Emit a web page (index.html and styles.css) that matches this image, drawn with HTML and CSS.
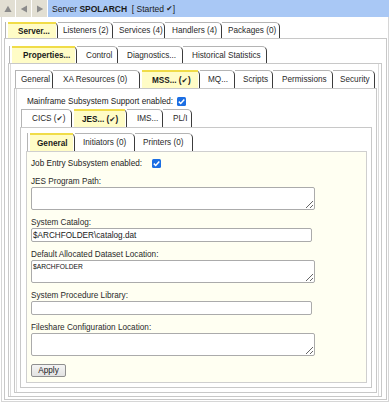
FILE: index.html
```html
<!DOCTYPE html>
<html>
<head>
<meta charset="utf-8">
<title>Server SPOLARCH</title>
<link rel="stylesheet" href="styles.css">
</head>
<body>
<div class="topbar">
  <div class="navbtn"><svg viewBox="0 0 8 8"><polygon points="4,0.8 7.6,7 0.4,7"/></svg></div>
  <div class="navbtn"><svg viewBox="0 0 8 8"><polygon points="0.8,4 7,0.6 7,7.4"/></svg></div>
  <div class="navbtn"><svg viewBox="0 0 8 8"><polygon points="7.2,4 1,0.6 1,7.4"/></svg></div>
  <div class="title">Server&nbsp;<b>SPOLARCH</b>&nbsp; [ Started&nbsp;<span class="chk">✔</span>]</div>
</div>
<div class="frame">
  <div class="tabs t1">
    <div class="tab first sel k-server"><span class="yel">Server...</span></div>
    <div class="tab k-listeners">Listeners (2)</div>
    <div class="tab k-services">Services (4)</div>
    <div class="tab k-handlers">Handlers (4)</div>
    <div class="tab k-packages">Packages (0)</div>
  </div>
  <div class="panel p1">
    <div class="tabs t2">
      <div class="tab first sel k-props"><span class="yel">Properties...</span></div>
      <div class="tab k-control">Control</div>
      <div class="tab k-diag">Diagnostics...</div>
      <div class="tab k-hist">Historical Statistics</div>
    </div>
    <div class="panel p2">
      <div class="tabs t3">
        <div class="tab first k-general">General</div>
        <div class="tab k-xa">XA Resources (0)</div>
        <div class="tab sel k-mss"><span class="yel">MSS... (<span class="chk">✔</span>)</span></div>
        <div class="tab k-mq">MQ...</div>
        <div class="tab k-scripts">Scripts</div>
        <div class="tab k-perm">Permissions</div>
        <div class="tab k-sec">Security</div>
      </div>
      <div class="panel p3">
        <div class="cbrow">Mainframe Subsystem Support enabled: <span class="cb cb-a"><svg viewBox="0 0 8 8"><path d="M1.6 4.1 L3.3 5.8 L6.5 2.2"/></svg></span></div>
        <div class="tabs t4">
          <div class="tab first k-cics">CICS (<span class="chk">✔</span>)</div>
          <div class="tab sel k-jes"><span class="yel">JES... (<span class="chk">✔</span>)</span></div>
          <div class="tab k-ims">IMS...</div>
          <div class="tab k-pli">PL/I</div>
        </div>
        <div class="panel p4">
          <div class="tabs t5">
            <div class="tab first sel k-gen2"><span class="yel">General</span></div>
            <div class="tab k-init">Initiators (0)</div>
            <div class="tab k-print">Printers (0)</div>
          </div>
          <div class="panel p5">
            <div class="row1">Job Entry Subsystem enabled: <span class="cb cb-b"><svg viewBox="0 0 8 8"><path d="M1.6 4.1 L3.3 5.8 L6.5 2.2"/></svg></span></div>
            <div class="lbl">JES Program Path:</div>
            <textarea class="ta"></textarea>
            <div class="lbl">System Catalog:</div>
            <input class="inp" type="text" value="$ARCHFOLDER\catalog.dat">
            <div class="lbl">Default Allocated Dataset Location:</div>
            <textarea class="ta">$ARCHFOLDER</textarea>
            <div class="lbl">System Procedure Library:</div>
            <input class="inp" type="text" value="">
            <div class="lbl">Fileshare Configuration Location:</div>
            <textarea class="ta"></textarea>
            <button class="btn" type="button">Apply</button>
          </div>
        </div>
      </div>
    </div>
  </div>
</div>
</body>
</html>
```
FILE: styles.css
```css
* { box-sizing: border-box; }
html, body { margin: 0; padding: 0; background: #fff; }
body {
  font-family: "Liberation Sans", Arial, "DejaVu Sans", sans-serif;
  font-size: 8.2px;
  color: #222;
  width: 389px;
  height: 402px;
  overflow: hidden;
}
.chk { font-family: "DejaVu Sans", sans-serif; font-size: 7.5px; }

/* top bar */
.topbar { display: flex; height: 17px; }
.navbtn {
  width: 15px; margin-right: 1px; background: #e2dfd3;
  display: flex; align-items: center; justify-content: center;
}
.navbtn svg { width: 8px; height: 8px; fill: #8b8b8b; }
.title {
  flex: 1; background: #a9c8f5; padding-left: 4px;
  display: flex; align-items: center; font-size: 8.5px; color: #1a1a1a;
  white-space: nowrap;
}

/* frame and panels */
.frame {
  margin-left: 1px; height: 385px;
  border: 1px solid #d6d6d6; border-top: none;
  padding: 5px 1px 1px 2px;
  display: flex; flex-direction: column;
}
.panel {
  border: 1px solid #c8c8c8; background: #fff;
  display: flex; flex-direction: column; flex: 1; min-height: 0;
}
.p1 { padding: 7px 4px 2px 3px; }
.p2 {
  padding: 6px 4px 3px 5px;
  box-shadow: inset 1px 0 0 #fff, inset 2px 0 0 #dcdcdc, inset -2px 0 0 #fff, inset -3px 0 0 #dcdcdc;
}
.p3 {
  padding: 0 4px 4px 5px;
  box-shadow: inset 1px 0 0 #fff, inset 2px 0 0 #dcdcdc;
}
.p4 { padding: 5px 4px 4px 5px; }
.p5 { display: block; padding: 6px 4px 3px 4px; background: #fffff2; border-color: #cfcfcf; }

/* tabs */
.tabs { display: flex; flex: none; margin-left: 1px; }
.t1 { height: 16px; }
.t2 { height: 17px; }
.t3, .t4, .t5 { height: 18px; }
.tab {
  flex: none; height: 100%;
  border-top: 1px solid #b4b4b4;
  border-right: 1px solid #3c3c3c;
  border-top-right-radius: 5px;
  display: flex; align-items: center;
  white-space: nowrap; background: #fff; color: #2a2a2a;
}
.tab.first { border-left: 1px solid #b4b4b4; }
.tab.sel { border-top: none; padding: 0 1px 0 2px; align-items: stretch; }
.yel {
  flex: 1; background: #fffcc6; border-top: 2px solid #f0dc48;
  display: flex; align-items: center; font-weight: bold; color: #1a1a1a;
}

.k-server { width: 53px; } .k-server .yel { padding-left: 10px; }
.k-listeners { width: 55px; padding-left: 5px; }
.k-services { width: 52px; padding-left: 6px; }
.k-handlers { width: 57px; padding-left: 7px; }
.k-packages { width: 58px; padding-left: 6px; }

.k-props { width: 68px; } .k-props .yel { padding-left: 11px; }
.k-control { width: 41px; padding-left: 9px; }
.k-diag { width: 65px; padding-left: 9px; }
.k-hist { width: 84px; padding-left: 9px; }

.k-general { width: 38px; padding-left: 5px; }
.k-xa { width: 87px; padding-left: 10px; }
.k-mss { width: 60px; } .k-mss .yel { padding-left: 10px; }
.k-mq { width: 35px; padding-left: 8px; }
.k-scripts { width: 38px; padding-left: 8px; }
.k-perm { width: 60px; padding-left: 9px; }
.k-sec { width: 42px; padding-left: 7px; }

.k-cics { width: 51px; padding-left: 10px; }
.k-jes { width: 55px; } .k-jes .yel { padding-left: 8px; }
.k-ims { width: 36px; padding-left: 10px; }
.k-pli { width: 29px; padding-left: 10px; }

.k-gen2 { width: 48px; } .k-gen2 .yel { padding-left: 7px; }
.k-init { width: 60px; padding-left: 8px; }
.k-print { width: 58px; padding-left: 8px; }

/* checkbox rows */
.cbrow {
  flex: none; height: 11px; margin: 7px 0 2px 7px;
  display: flex; align-items: center; white-space: nowrap;
}
.row1 { height: 10px; margin-bottom: 9px; display: flex; align-items: center; white-space: nowrap; }
.cb {
  display: inline-flex; width: 9px; height: 9px;
  background: #1b6ee3; border-radius: 1.5px;
}
.cb svg { width: 9px; height: 9px; fill: none; stroke: #fff; stroke-width: 1.3; }
.cb-a { margin-left: 4px; }
.cb-b { margin-left: 10px; }

/* form fields */
.lbl { height: 10px; line-height: 10px; white-space: nowrap; color: #2a2a2a; }
.ta {
  display: block; width: 284px; height: 23px; margin: 0 0 8px 0;
  border: 1px solid #ababab; border-radius: 2px; background: #fff;
  padding: 2px 1px; outline: none;
  font-family: "Liberation Sans", Arial, sans-serif; font-size: 6.7px; color: #111;
  resize: both;
}
.inp {
  display: block; width: 281px; height: 14px; margin: 0 0 8px 0;
  border: 1px solid #ababab; border-radius: 2px; background: #fff;
  padding: 0 1px; outline: none;
  font-family: "Liberation Sans", Arial, sans-serif; font-size: 8.2px; color: #1a1a1a;
}
.btn {
  display: block; width: 35px; height: 13px; margin: 2px 0 0 0; padding: 0;
  border: 1px solid #8f8f8f; border-radius: 2px;
  background: linear-gradient(#f4f4f4, #e2e2e2);
  font-family: "Liberation Sans", Arial, sans-serif; font-size: 8.2px; color: #1a1a1a;
}
```
